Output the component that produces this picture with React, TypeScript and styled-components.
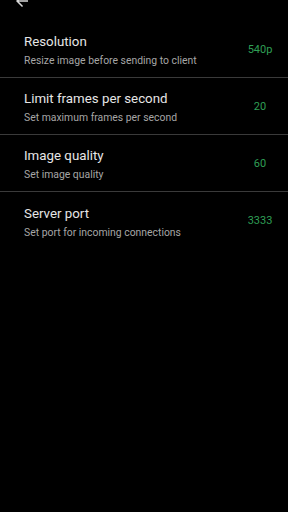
import React from 'react';
import styled, { createGlobalStyle } from 'styled-components';

const GlobalStyle = createGlobalStyle`
  html, body {
    margin: 0;
    padding: 0;
    background-color: #000000;
  }
  body {
    font-family: Roboto, "Noto Sans", "Liberation Sans", sans-serif;
    overflow: hidden;
  }
`;

const Screen = styled.div`
  width: 288px;
  height: 512px;
  background-color: #000000;
  overflow: hidden;
`;

const Toolbar = styled.div`
  height: 40px;
  margin-top: -19px;
  display: flex;
  align-items: center;
  padding-left: 13px;
`;

const BackButton = styled.button`
  width: 18px;
  height: 18px;
  padding: 0;
  border: none;
  background: transparent;
  display: flex;
  align-items: center;
  justify-content: center;
  color: #d8d8d8;
`;

const SettingsList = styled.div`
  display: flex;
  flex-direction: column;
`;

const SettingRow = styled.div<{ $last?: boolean }>`
  display: flex;
  align-items: center;
  height: 57px;
  box-sizing: border-box;
  padding: 0 11px 0 24px;
  border-bottom: ${(p) => (p.$last ? 'none' : '1px solid #3a3a3a')};
`;

const TextBlock = styled.div`
  flex: 1;
  display: flex;
  flex-direction: column;
  gap: 4px;
  padding-top: 3px;
`;

const Title = styled.div`
  font-size: 13.3px;
  line-height: 16px;
  color: #e6e6e6;
`;

const Subtitle = styled.div`
  font-size: 10.4px;
  line-height: 13px;
  color: #a6a6a6;
`;

const Value = styled.div`
  width: 34px;
  text-align: center;
  font-size: 11px;
  color: #2f9e55;
`;

type Setting = {
  id: string;
  title: string;
  summary: string;
  value: string;
};

const settings: Setting[] = [
  { id: 'resolution', title: 'Resolution', summary: 'Resize image before sending to client', value: '540p' },
  { id: 'fps', title: 'Limit frames per second', summary: 'Set maximum frames per second', value: '20' },
  { id: 'quality', title: 'Image quality', summary: 'Set image quality', value: '60' },
  { id: 'port', title: 'Server port', summary: 'Set port for incoming connections', value: '3333' },
];

const ArrowBack = () => (
  <svg width="18" height="18" viewBox="0 0 24 24" fill="currentColor">
    <path d="M20 11H7.83l5.59-5.59L12 4l-8 8 8 8 1.41-1.41L7.83 13H20v-2z" />
  </svg>
);

export default function App() {
  return (
    <>
      <GlobalStyle />
      <Screen>
        <Toolbar>
          <BackButton aria-label="Back">
            <ArrowBack />
          </BackButton>
        </Toolbar>
        <SettingsList>
          {settings.map((s, i) => (
            <SettingRow key={s.id} $last={i === settings.length - 1}>
              <TextBlock>
                <Title>{s.title}</Title>
                <Subtitle>{s.summary}</Subtitle>
              </TextBlock>
              <Value>{s.value}</Value>
            </SettingRow>
          ))}
        </SettingsList>
      </Screen>
    </>
  );
}
